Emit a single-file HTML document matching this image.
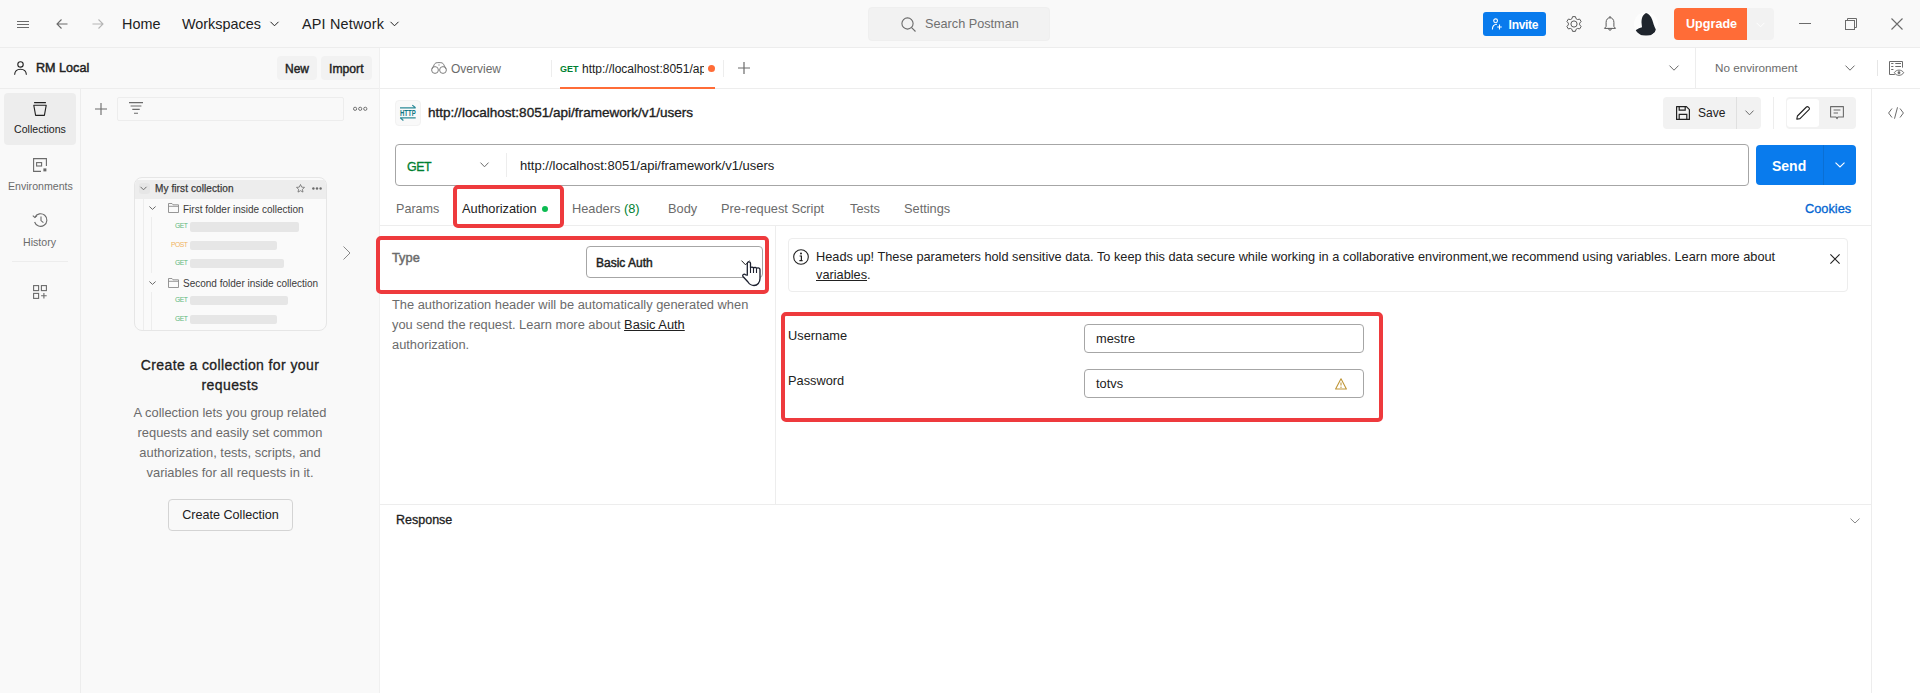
<!DOCTYPE html>
<html><head><meta charset="utf-8">
<style>
html,body{margin:0;padding:0}
body{width:1920px;height:693px;position:relative;overflow:hidden;background:#fff;font-family:"Liberation Sans",sans-serif;color:#212121}
.a{position:absolute}
.t{position:absolute;white-space:nowrap;line-height:1}
svg{position:absolute;overflow:visible}
</style></head><body>

<!-- ===== TOP BAR ===== -->
<div class="a" style="left:0;top:0;width:1920px;height:47px;background:#f9f9f9;border-bottom:1px solid #ededed"></div>
<!-- hamburger -->
<svg style="left:17px;top:21px" width="12" height="8" viewBox="0 0 12 8"><path d="M0 .5H12M0 3.5H12M0 6.5H12" stroke="#6b6b6b" stroke-width="1"/></svg>
<!-- back -->
<svg style="left:56px;top:18px" width="12" height="12" viewBox="0 0 12 12"><path d="M11.5 6H1M5.5 1.5L1 6l4.5 4.5" stroke="#6b6b6b" stroke-width="1.1" fill="none"/></svg>
<!-- forward -->
<svg style="left:92px;top:18px" width="12" height="12" viewBox="0 0 12 12"><path d="M.5 6H11M6.5 1.5L11 6l-4.5 4.5" stroke="#b5b5b5" stroke-width="1.1" fill="none"/></svg>
<div class="t" style="left:122px;top:17px;font-size:14.4px;color:#212121">Home</div>
<div class="t" style="left:182px;top:17px;font-size:14.4px;color:#212121">Workspaces</div>
<svg style="left:270px;top:21px" width="9" height="6" viewBox="0 0 9 6"><path d="M.5 .8L4.5 4.8 8.5 .8" stroke="#212121" stroke-width="1" fill="none"/></svg>
<div class="t" style="left:302px;top:17px;font-size:14.4px;color:#212121;letter-spacing:.2px">API Network</div>
<svg style="left:390px;top:21px" width="9" height="6" viewBox="0 0 9 6"><path d="M.5 .8L4.5 4.8 8.5 .8" stroke="#212121" stroke-width="1" fill="none"/></svg>

<!-- search -->
<div class="a" style="left:868px;top:7px;width:180px;height:32px;background:#f2f2f2;border:1px solid #efefef;border-radius:4px"></div>
<svg style="left:901px;top:16.5px" width="15" height="15" viewBox="0 0 15 15"><circle cx="6.5" cy="6.5" r="5.6" stroke="#6b6b6b" stroke-width="1.1" fill="none"/><path d="M10.6 10.6L14.5 14.5" stroke="#6b6b6b" stroke-width="1.1"/></svg>
<div class="t" style="left:925px;top:18px;font-size:12.7px;color:#707070">Search Postman</div>

<!-- invite -->
<div class="a" style="left:1483px;top:12px;width:63px;height:24px;background:#097bed;border-radius:3px"></div>
<svg style="left:1491px;top:18px" width="12" height="12" viewBox="0 0 12 12"><circle cx="4.6" cy="2.8" r="1.9" stroke="#fff" stroke-width="1.1" fill="none"/><path d="M1.4 11.6C1.4 8.4 3.2 6.4 6 6.3M8.5 6.4V11.6M6.2 9H10.8" stroke="#fff" stroke-width="1.1" fill="none"/></svg>
<div class="t" style="left:1508.6px;top:18.5px;font-size:12px;font-weight:700;letter-spacing:-.3px;color:#fff">Invite</div>
<!-- gear -->
<svg style="left:1566px;top:16px" width="16" height="16" viewBox="0 0 16 16"><path d="M10.04 2.68 L9.43 0.64 L6.57 0.64 L5.96 2.68 L4.41 3.57 L2.34 3.08 L0.91 5.56 L2.37 7.11 L2.37 8.89 L0.91 10.44 L2.34 12.92 L4.41 12.43 L5.96 13.32 L6.57 15.36 L9.43 15.36 L10.04 13.32 L11.59 12.43 L13.66 12.92 L15.09 10.44 L13.63 8.89 L13.63 7.11 L15.09 5.56 L13.66 3.08 L11.59 3.57z" stroke="#5a5a5a" stroke-width="1" fill="none" stroke-linejoin="round"/><circle cx="8" cy="8" r="3.1" stroke="#5a5a5a" stroke-width="1" fill="none"/></svg>
<!-- bell -->
<svg style="left:1604px;top:16px" width="12" height="16" viewBox="0 0 12 16"><path d="M6 1.8C3.6 1.8 2.1 3.7 2.1 6.4V10.4L.5 12.4H11.5L9.9 10.4V6.4C9.9 3.7 8.4 1.8 6 1.8z" stroke="#5a5a5a" stroke-width="1" fill="none" stroke-linejoin="round"/><path d="M4.6 12.6a1.4 1.6 0 0 0 2.8 0M5.1 1.7L6 .4 6.9 1.7" stroke="#5a5a5a" stroke-width="1" fill="none"/></svg>
<!-- avatar -->
<div class="a" style="left:1634px;top:12px;width:24px;height:24px;border-radius:50%;background:#fdfdfd;overflow:hidden">
  <svg style="left:0;top:0" width="24" height="24" viewBox="0 0 24 24"><path d="M12 1C14.5 1.8 17 4 18.3 8c1 3.2 1.8 6 3.5 9.5L20.8 20.5 17 23.5H6.5L2 20.5 1.6 18.2 5 16.3 8 15.2 7.5 10.5C7.6 6.5 8 3.5 12 1z" fill="#1f252d"/></svg>
</div>
<!-- upgrade -->
<div class="a" style="left:1674px;top:8px;width:100px;height:32px;background:#f2f2f2;border-radius:4px"></div>
<div class="a" style="left:1674px;top:8px;width:73px;height:32px;background:#ff6c37;border-radius:4px 0 0 4px"></div>
<div class="t" style="left:1686px;top:17.5px;font-size:12.6px;font-weight:700;color:#fff">Upgrade</div>
<svg style="left:1756px;top:22px" width="9" height="6" viewBox="0 0 9 6"><path d="M.5 .8L4.5 4.8 8.5 .8" stroke="#fff" stroke-width="1" fill="none"/></svg>
<!-- window controls -->
<svg style="left:1799px;top:23px" width="12" height="1" viewBox="0 0 12 1"><path d="M0 .5H12" stroke="#6b6b6b" stroke-width="1"/></svg>
<svg style="left:1845px;top:18px" width="12" height="12" viewBox="0 0 12 12"><rect x=".5" y="2.5" width="9" height="9" stroke="#6b6b6b" fill="none"/><path d="M2.5 2.5V.5h9v9h-2" stroke="#6b6b6b" fill="none"/></svg>
<svg style="left:1891px;top:18px" width="12" height="12" viewBox="0 0 12 12"><path d="M.5 .5l11 11M11.5 .5l-11 11" stroke="#6b6b6b" stroke-width="1.1"/></svg>

<!-- ===== LEFT SIDEBAR ===== -->
<div class="a" style="left:0;top:48px;width:379px;height:645px;background:#f9f9f9;border-right:1px solid #f0f0f0"></div>
<div class="a" style="left:0;top:88px;width:379px;height:1px;background:#ededed"></div>
<div class="a" style="left:80px;top:89px;width:1px;height:604px;background:#ededed"></div>
<!-- person icon -->
<svg style="left:14px;top:61px" width="13" height="14" viewBox="0 0 13 14"><circle cx="6.5" cy="3.4" r="2.7" stroke="#212121" stroke-width="1.1" fill="none"/><path d="M.6 13.8C.8 10.2 3.2 8.3 6.5 8.3s5.7 1.9 5.9 5.5" stroke="#212121" stroke-width="1.1" fill="none"/></svg>
<div class="t" style="left:36px;top:62px;font-size:12.6px;-webkit-text-stroke-width:.45px;color:#212121">RM Local</div>
<div class="a" style="left:277px;top:56px;width:40px;height:24px;background:#f2f2f2;border-radius:4px"></div>
<div class="t" style="left:285px;top:63.2px;font-size:12px;-webkit-text-stroke-width:.4px;color:#212121">New</div>
<div class="a" style="left:321px;top:56px;width:51px;height:24px;background:#f2f2f2;border-radius:4px"></div>
<div class="t" style="left:329px;top:63.2px;font-size:12.2px;-webkit-text-stroke-width:.4px;color:#212121">Import</div>

<!-- rail -->
<div class="a" style="left:4px;top:93px;width:72px;height:52px;background:#ededed;border-radius:4px"></div>
<svg style="left:33px;top:102px" width="14" height="14" viewBox="0 0 14 14"><path d="M1.1 .6H12.9M.8 3.3H13.2L11.4 13.4H2.6z" stroke="#212121" stroke-width="1.1" fill="none" stroke-linejoin="round"/></svg>
<div class="t" style="left:14px;top:124px;font-size:10.6px;color:#212121">Collections</div>
<svg style="left:33px;top:158px" width="14" height="14" viewBox="0 0 14 14"><path d="M13.4 8V.6H.6v12.8H8" stroke="#6b6b6b" stroke-width="1.1" fill="none"/><rect x="3.6" y="4.6" width="5" height="3.4" stroke="#6b6b6b" stroke-width="1.1" fill="none"/><rect x="10.4" y="10.4" width="3" height="3" fill="#6b6b6b"/></svg>
<div class="t" style="left:8px;top:181px;font-size:10.6px;color:#6b6b6b">Environments</div>
<svg style="left:32px;top:213px" width="16" height="15" viewBox="0 0 16 15"><path d="M2.6 9A6.3 6.3 0 1 0 2.9 4.3" stroke="#6b6b6b" stroke-width="1.1" fill="none"/><path d="M.8 2.6L2.9 4.6 5 2.6" stroke="#6b6b6b" stroke-width="1.1" fill="none"/><path d="M9 3.6V7.6L11.4 9.6" stroke="#6b6b6b" stroke-width="1.1" fill="none"/></svg>
<div class="t" style="left:23px;top:237px;font-size:10.6px;color:#6b6b6b">History</div>
<div class="a" style="left:12px;top:261px;width:56px;height:1px;background:#ededed"></div>
<svg style="left:33px;top:285px" width="14" height="14" viewBox="0 0 14 14"><rect x=".6" y=".6" width="5" height="5" stroke="#6b6b6b" stroke-width="1.1" fill="none"/><rect x="8.4" y=".6" width="5" height="5" stroke="#6b6b6b" stroke-width="1.1" fill="none"/><rect x=".6" y="8.4" width="5" height="5" stroke="#6b6b6b" stroke-width="1.1" fill="none"/><path d="M10.9 8V13.6M8.1 10.8H13.7" stroke="#6b6b6b" stroke-width="1.1"/></svg>

<!-- collections toolbar -->
<svg style="left:95px;top:103px" width="12" height="12" viewBox="0 0 12 12"><path d="M6 0V12M0 6H12" stroke="#6b6b6b" stroke-width="1.1"/></svg>
<div class="a" style="left:117px;top:97px;width:225px;height:22px;border:1px solid #ededed;border-radius:2px;background:#f9f9f9"></div>
<svg style="left:129px;top:102px" width="14" height="13" viewBox="0 0 14 13"><path d="M0 .6H14M1.6 4H12.4M3.3 7.4H10.7M5 11.2H9" stroke="#6b6b6b" stroke-width="1.1"/></svg>
<svg style="left:353px;top:106px" width="15" height="6" viewBox="0 0 15 6"><circle cx="2.1" cy="2.8" r="1.6" stroke="#6b6b6b" stroke-width=".95" fill="none"/><circle cx="7.2" cy="2.8" r="1.6" stroke="#6b6b6b" stroke-width=".95" fill="none"/><circle cx="12.3" cy="2.8" r="1.6" stroke="#6b6b6b" stroke-width=".95" fill="none"/></svg>


<!-- collection illustration card -->
<div class="a" style="left:134px;top:177px;width:191px;height:152px;border:1px solid #e6e6e6;border-radius:8px;background:#fafafa;overflow:hidden">
  <div class="a" style="left:0;top:2px;width:191px;height:19px;background:#ededed"></div>
  <div class="a" style="left:4px;top:5px;width:11px;height:11px;background:#e6e6e6;border-radius:3px"></div>
  <div class="a" style="left:8px;top:20px;width:1px;height:140px;background:#ededed"></div>
  <div class="a" style="left:16px;top:39px;width:1px;height:56px;background:#ededed"></div>
  <div class="a" style="left:16px;top:114px;width:1px;height:40px;background:#ededed"></div>
</div>
<svg style="left:140px;top:186px" width="7" height="5" viewBox="0 0 7 5"><path d="M.5 .8L3.5 3.8 6.5 .8" stroke="#6b6b6b" stroke-width="1" fill="none"/></svg>
<div class="t" style="left:155px;top:184.2px;font-size:10px;-webkit-text-stroke-width:.25px;color:#3a3a3a;letter-spacing:.1px">My first collection</div>
<svg style="left:296px;top:184px" width="9" height="9" viewBox="0 0 9 9"><path d="M4.5 .5l1.2 2.6 2.8.3-2.1 1.9.6 2.8-2.5-1.4-2.5 1.4.6-2.8L.5 3.4l2.8-.3z" stroke="#6b6b6b" stroke-width=".8" fill="none" stroke-linejoin="round"/></svg>
<svg style="left:312px;top:187px" width="10" height="3" viewBox="0 0 10 3"><circle cx="1.4" cy="1.5" r="1.2" fill="#6b6b6b"/><circle cx="5" cy="1.5" r="1.2" fill="#6b6b6b"/><circle cx="8.6" cy="1.5" r="1.2" fill="#6b6b6b"/></svg>
<svg style="left:149px;top:206px" width="7" height="4" viewBox="0 0 7 4"><path d="M.4 .5L3.5 3.4 6.6 .5" stroke="#6b6b6b" stroke-width="1" fill="none"/></svg>
<svg style="left:168px;top:203px" width="11" height="10" viewBox="0 0 11 10"><path d="M.5 9.5V.5H4L5 1.8H10.5V9.5z M.5 3.3H10.5" stroke="#8a8a8a" stroke-width=".9" fill="none"/></svg>
<div class="t" style="left:183px;top:204.5px;font-size:10px;color:#3a3a3a">First folder inside collection</div>
<div class="t" style="left:175px;top:223px;font-size:6.8px;color:#5cb87a;letter-spacing:-.5px">GET</div>
<div class="a" style="left:190px;top:222px;width:109px;height:10px;background:#e6e6e6;border-radius:2px"></div>
<div class="t" style="left:171px;top:241.5px;font-size:6.8px;color:#f0b35e;letter-spacing:-.5px">POST</div>
<div class="a" style="left:190px;top:241px;width:87px;height:9px;background:#e6e6e6;border-radius:2px"></div>
<div class="t" style="left:175px;top:259.5px;font-size:6.8px;color:#5cb87a;letter-spacing:-.5px">GET</div>
<div class="a" style="left:190px;top:259px;width:94px;height:9px;background:#e6e6e6;border-radius:2px"></div>
<svg style="left:149px;top:281px" width="7" height="4" viewBox="0 0 7 4"><path d="M.4 .5L3.5 3.4 6.6 .5" stroke="#6b6b6b" stroke-width="1" fill="none"/></svg>
<svg style="left:168px;top:277.5px" width="11" height="10" viewBox="0 0 11 10"><path d="M.5 9.5V.5H4L5 1.8H10.5V9.5z M.5 3.3H10.5" stroke="#8a8a8a" stroke-width=".9" fill="none"/></svg>
<div class="t" style="left:183px;top:278.5px;font-size:10px;color:#3a3a3a">Second folder inside collection</div>
<div class="t" style="left:175px;top:296.5px;font-size:6.8px;color:#5cb87a;letter-spacing:-.5px">GET</div>
<div class="a" style="left:190px;top:296px;width:98px;height:9px;background:#e6e6e6;border-radius:2px"></div>
<div class="t" style="left:175px;top:315.5px;font-size:6.8px;color:#5cb87a;letter-spacing:-.5px">GET</div>
<div class="a" style="left:190px;top:315px;width:87px;height:9px;background:#e6e6e6;border-radius:2px"></div>
<svg style="left:343px;top:246px" width="8" height="14" viewBox="0 0 8 14"><path d="M.5 .5L7 7 .5 13.5" stroke="#8a8a8a" stroke-width="1" fill="none"/></svg>

<div class="a" style="left:81px;top:355.2px;width:298px;text-align:center;font-size:14px;-webkit-text-stroke-width:.3px;line-height:20px;color:#212121;letter-spacing:.4px">Create a collection for your<br>requests</div>
<div class="a" style="left:81px;top:403px;width:298px;text-align:center;font-size:12.9px;line-height:20px;color:#6b6b6b">A collection lets you group related<br>requests and easily set common<br>authorization, tests, scripts, and<br>variables for all requests in it.</div>
<div class="a" style="left:168px;top:499px;width:123px;height:30px;border:1px solid #d4d4d4;border-radius:4px;background:#f9f9f9"></div>
<div class="t" style="left:168px;top:509px;width:125px;text-align:center;font-size:12.6px;color:#212121">Create Collection</div>

<!-- ===== MAIN TAB BAR ===== -->
<div class="a" style="left:380px;top:88px;width:1540px;height:1px;background:#ededed"></div>
<svg style="left:431px;top:62px" width="16" height="12" viewBox="0 0 16 12"><circle cx="4" cy="8" r="3.4" stroke="#808080" stroke-width="1" fill="none"/><circle cx="12" cy="8" r="3.4" stroke="#808080" stroke-width="1" fill="none"/><path d="M1 7L3.5 2.2C4.2 1 5 .6 8 .6s3.8.4 4.5 1.6L15 7M8 2.4V3.6" stroke="#808080" stroke-width="1" fill="none"/></svg>
<div class="t" style="left:451px;top:63px;font-size:12px;color:#6b6b6b">Overview</div>
<div class="a" style="left:551px;top:60px;width:1px;height:17px;background:#ededed"></div>
<div class="t" style="left:560px;top:64.5px;font-size:9px;font-weight:700;color:#007f31">GET</div>
<div class="t" style="left:582px;top:63px;font-size:12px;color:#212121;width:122px;overflow:hidden">http://localhost:8051/api/framework</div>
<div class="a" style="left:708px;top:65px;width:7px;height:7px;border-radius:50%;background:#ff6c37"></div>
<div class="a" style="left:560px;top:87px;width:155px;height:2px;background:#ff6c37"></div>
<div class="a" style="left:723px;top:60px;width:1px;height:17px;background:#ededed"></div>
<svg style="left:738px;top:62px" width="12" height="12" viewBox="0 0 12 12"><path d="M6 0V12M0 6H12" stroke="#6b6b6b" stroke-width="1.2"/></svg>
<svg style="left:1669px;top:65px" width="10" height="6" viewBox="0 0 10 6"><path d="M.5 .6L5 5.2 9.5 .6" stroke="#6b6b6b" stroke-width="1" fill="none"/></svg>
<div class="a" style="left:1695px;top:48px;width:1px;height:40px;background:#ededed"></div>
<div class="t" style="left:1715px;top:62px;font-size:11.7px;color:#6b6b6b">No environment</div>
<svg style="left:1845px;top:65px" width="10" height="6" viewBox="0 0 10 6"><path d="M.5 .6L5 5.2 9.5 .6" stroke="#6b6b6b" stroke-width="1" fill="none"/></svg>
<div class="a" style="left:1877px;top:60px;width:1px;height:16px;background:#e6e6e6"></div>
<svg style="left:1889px;top:61px" width="16" height="15" viewBox="0 0 16 15"><path d="M5.8 13.5H.5V.5H13.5V6.6" stroke="#6b6b6b" stroke-width="1" fill="none"/><path d="M2.2 2.5H4.4M6.3 2.5H12M2.2 5.5H4.4M6.3 5.5H12M2.2 8.5H4.4" stroke="#6b6b6b" stroke-width="1"/><path d="M5.3 11.7C6.4 10 8 9.1 10 9.1s3.6.9 4.7 2.6C13.6 13.4 12 14.3 10 14.3S6.4 13.4 5.3 11.7z" stroke="#6b6b6b" stroke-width="1" fill="#fff"/><circle cx="10" cy="11.7" r="1.4" fill="#6b6b6b"/></svg>

<!-- right sidebar -->
<div class="a" style="left:1871px;top:89px;width:1px;height:604px;background:#ededed"></div>
<svg style="left:1888px;top:107px" width="16" height="12" viewBox="0 0 16 12"><path d="M4 1.5L.6 6 4 10.5M12 1.5L15.4 6 12 10.5M9.5 .3L6.5 11.7" stroke="#6b6b6b" stroke-width="1" fill="none"/></svg>


<!-- ===== REQUEST HEADER ===== -->
<div class="a" style="left:395px;top:100px;width:24px;height:24px;background:#f9f9f9;border:1px solid #f2f2f2;border-radius:4px"></div>
<svg style="left:399px;top:104px" width="18" height="18" viewBox="0 0 18 18"><path d="M1 3.8H16.7M13.3 1.1L16.5 3.8M1 13.8H16.7M1.2 13.8L4.4 16.5" stroke="#2b8a98" stroke-width="1.2" fill="none"/><text x="1" y="11.95" font-family="Liberation Sans" font-size="8.4" font-weight="700" fill="#0e7886" textLength="15.7" lengthAdjust="spacingAndGlyphs">HTTP</text></svg>
<div class="t" style="left:428px;top:106.4px;font-size:13.55px;-webkit-text-stroke-width:.35px;color:#212121">http://localhost:8051/api/framework/v1/users</div>

<!-- save group -->
<div class="a" style="left:1663px;top:97px;width:98px;height:32px;background:#f2f2f2;border-radius:4px"></div>
<div class="a" style="left:1736px;top:97px;width:1px;height:32px;background:#e0e0e0"></div>
<svg style="left:1676px;top:106px" width="14" height="14" viewBox="0 0 14 14"><path d="M.6 .6H10.4L13.4 3.6V13.4H.6z" stroke="#212121" stroke-width="1.2" fill="none" stroke-linejoin="round"/><path d="M3.2 .6V4.2H9.2V.6M3.2 13.4V8.4H10.8V13.4" stroke="#212121" stroke-width="1.2" fill="none"/></svg>
<div class="t" style="left:1698px;top:106.5px;font-size:12px;color:#212121">Save</div>
<svg style="left:1745px;top:110px" width="9" height="6" viewBox="0 0 9 6"><path d="M.5 .6L4.5 4.8 8.5 .6" stroke="#6b6b6b" stroke-width="1" fill="none"/></svg>
<div class="a" style="left:1773px;top:97px;width:1px;height:32px;background:#ededed"></div>
<div class="a" style="left:1786px;top:97px;width:70px;height:32px;background:#f2f2f2;border-radius:4px"></div>
<div class="a" style="left:1787px;top:99px;width:32px;height:28px;background:#fff;border-radius:3px"></div>
<svg style="left:1796px;top:106px" width="14" height="14" viewBox="0 0 14 14"><path d="M.8 13.2L1.4 10 10.4 1a1.3 1.3 0 0 1 1.9 0l.7.7a1.3 1.3 0 0 1 0 1.9L4 12.6z" stroke="#212121" stroke-width="1.1" fill="none" stroke-linejoin="round"/></svg>
<svg style="left:1830px;top:106px" width="14" height="14" viewBox="0 0 14 14"><path d="M.6 .6H13.4V11H8L7 12.6 6 11H.6z" stroke="#6b6b6b" stroke-width="1.1" fill="none" stroke-linejoin="round"/><path d="M3.6 4H10.4M3.6 7H8" stroke="#6b6b6b" stroke-width="1.1"/></svg>

<!-- URL bar -->
<div class="a" style="left:395px;top:144px;width:1352px;height:40px;border:1px solid #a6a6a6;border-radius:4px;background:#fff"></div>
<div class="t" style="left:407px;top:160.8px;font-size:12.4px;-webkit-text-stroke-width:.3px;color:#007f31;letter-spacing:-.5px">GET</div>
<svg style="left:480px;top:162px" width="9" height="6" viewBox="0 0 9 6"><path d="M.5 .6L4.5 4.8 8.5 .6" stroke="#6b6b6b" stroke-width="1" fill="none"/></svg>
<div class="a" style="left:506px;top:153px;width:1px;height:24px;background:#ededed"></div>
<div class="t" style="left:520px;top:159px;font-size:13px;color:#212121;letter-spacing:0">http://localhost:8051/api/framework/v1/users</div>

<!-- send -->
<div class="a" style="left:1756px;top:145px;width:100px;height:40px;background:#097bed;border-radius:4px"></div>
<div class="a" style="left:1823px;top:145px;width:1px;height:40px;background:#0a6fd4"></div>
<div class="t" style="left:1772px;top:158.5px;font-size:14px;font-weight:700;color:#fff">Send</div>
<svg style="left:1835px;top:162px" width="10" height="6" viewBox="0 0 10 6"><path d="M.5 .6L5 5 9.5 .6" stroke="#fff" stroke-width="1.1" fill="none"/></svg>

<!-- request tabs -->
<div class="t" style="left:396px;top:203px;font-size:12.6px;color:#6b6b6b">Params</div>
<div class="t" style="left:462px;top:203px;font-size:12.8px;color:#212121">Authorization</div>
<div class="a" style="left:542px;top:206px;width:6px;height:6px;border-radius:50%;background:#0cbb52"></div>
<div class="t" style="left:572px;top:203px;font-size:12.8px;color:#6b6b6b">Headers <span style="color:#007f31">(8)</span></div>
<div class="t" style="left:668px;top:203px;font-size:12.8px;color:#6b6b6b">Body</div>
<div class="t" style="left:721px;top:203px;font-size:12.8px;color:#6b6b6b">Pre-request Script</div>
<div class="t" style="left:850px;top:203px;font-size:12.8px;color:#6b6b6b">Tests</div>
<div class="t" style="left:904px;top:203px;font-size:12.8px;color:#6b6b6b">Settings</div>
<div class="t" style="left:1805px;top:203px;font-size:12.8px;-webkit-text-stroke-width:.3px;color:#0265d2">Cookies</div>
<div class="a" style="left:380px;top:225px;width:1491px;height:1px;background:#ededed"></div>
<div class="a" style="left:775px;top:226px;width:1px;height:278px;background:#ededed"></div>

<!-- auth type left -->
<div class="t" style="left:392px;top:252px;font-size:12.8px;-webkit-text-stroke-width:.45px;color:#6b6b6b">Type</div>
<div class="a" style="left:586px;top:246px;width:175px;height:30px;border:1px solid #a6a6a6;border-radius:4px;background:#fff"></div>
<div class="t" style="left:596px;top:256.8px;font-size:12px;-webkit-text-stroke-width:.45px;color:#212121">Basic Auth</div>
<svg style="left:741px;top:260px" width="9" height="6" viewBox="0 0 9 6"><path d="M.5 .6L4.5 4.8 8.5 .6" stroke="#212121" stroke-width="1" fill="none"/></svg>
<div class="a" style="left:392px;top:294.5px;width:380px;font-size:12.85px;line-height:20px;color:#6b6b6b">The authorization header will be automatically generated when<br>you send the request. Learn more about <span style="color:#212121;text-decoration:underline">Basic Auth</span><br>authorization.</div>

<!-- banner -->
<div class="a" style="left:788px;top:238px;width:1058px;height:52px;border:1px solid #ededed;border-radius:4px;background:#fff"></div>
<svg style="left:793px;top:249px" width="16" height="16" viewBox="0 0 16 16"><circle cx="8" cy="8" r="7.3" stroke="#212121" stroke-width="1.1" fill="none"/><circle cx="8" cy="4.6" r="1" fill="#212121"/><path d="M6.6 7H8.4V11.6M6.4 11.6H9.6" stroke="#212121" stroke-width="1.2" fill="none"/></svg>
<div class="a" style="left:816px;top:248px;width:1000px;font-size:12.76px;line-height:18px;color:#212121">Heads up! These parameters hold sensitive data. To keep this data secure while working in a collaborative environment,we recommend using variables. Learn more about<br><span style="text-decoration:underline">variables</span>.</div>
<svg style="left:1830px;top:254px" width="10" height="10" viewBox="0 0 10 10"><path d="M.4 .4l9.2 9.2M9.6 .4L.4 9.6" stroke="#212121" stroke-width="1.1"/></svg>

<!-- form -->
<div class="t" style="left:788px;top:330px;font-size:12.8px;color:#212121">Username</div>
<div class="a" style="left:1084px;top:324px;width:278px;height:27px;border:1px solid #a6a6a6;border-radius:4px;background:#fff"></div>
<div class="t" style="left:1096px;top:333px;font-size:12.8px;color:#212121">mestre</div>
<div class="t" style="left:788px;top:375px;font-size:12.8px;color:#212121">Password</div>
<div class="a" style="left:1084px;top:369px;width:278px;height:27px;border:1px solid #a6a6a6;border-radius:4px;background:#fff"></div>
<div class="t" style="left:1096px;top:378px;font-size:12.8px;color:#212121">totvs</div>
<svg style="left:1335px;top:378px" width="12" height="12" viewBox="0 0 12 12"><path d="M6 .8L11.4 11H.6z" stroke="#bf9638" stroke-width="1.1" fill="none" stroke-linejoin="round"/><path d="M6 4.4V7.6" stroke="#bf9638" stroke-width="1.1"/><circle cx="6" cy="9.2" r=".7" fill="#bf9638"/></svg>

<!-- response -->
<div class="a" style="left:380px;top:504px;width:1491px;height:1px;background:#ededed"></div>
<div class="t" style="left:396px;top:513.9px;font-size:12.5px;-webkit-text-stroke-width:.3px;color:#212121">Response</div>
<svg style="left:1850px;top:518px" width="10" height="6" viewBox="0 0 10 6"><path d="M.5 .6L5 5 9.5 .6" stroke="#8a8a8a" stroke-width="1" fill="none"/></svg>

<!-- ===== RED ANNOTATION BOXES ===== -->
<div class="a" style="left:453px;top:185px;width:103px;height:35px;border:4px solid #ee3a3d;border-radius:5px"></div>
<div class="a" style="left:376px;top:236px;width:385px;height:50px;border:4px solid #ee3a3d;border-radius:5px"></div>
<div class="a" style="left:781px;top:312px;width:594px;height:102px;border:4px solid #ee3a3d;border-radius:5px"></div>

<!-- cursor -->
<svg style="left:742px;top:261px" width="20" height="26" viewBox="0 0 20 26"><path d="M5.3 14.2V2.2C5.3 1.3 6 .8 6.9 .8S8.5 1.3 8.5 2.2V6.8C8.7 6.4 9.3 6.1 10 6.1S11.3 6.5 11.5 7C11.8 6.6 12.3 6.4 13 6.4S14.3 6.8 14.5 7.4C14.8 7.1 15.3 6.9 16 6.9 17.2 6.9 18 7.6 18 8.8V17.5C18 21.5 15.5 24.5 12 24.5 9.5 24.5 7.6 23.5 6 21L1.2 15.8C.5 15 .6 14 1.3 13.5 2.1 13 3 13.2 3.7 13.9z" fill="#fff" stroke="#1b1f2e" stroke-width="1.3" stroke-linejoin="round"/><path d="M8.5 6.8V12M11.5 7V12M14.5 7.4V12" stroke="#1b1f2e" stroke-width="1.1"/></svg>
</body></html>
